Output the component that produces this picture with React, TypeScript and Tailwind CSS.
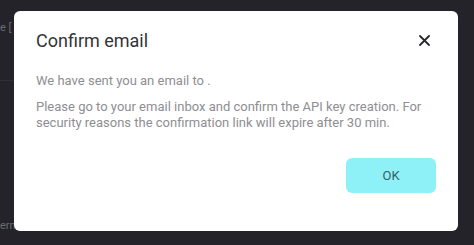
import React from "react";

export default function App() {
  return (
    <div className="relative w-[474px] h-[245px] overflow-hidden bg-[#232329]" style={{ fontFamily: "Roboto, 'Noto Sans', sans-serif" }}>
      <div className="absolute left-0 top-[20px] text-[11px] text-[#6b6b72]">e [</div>
      <div className="absolute left-0 top-[80px] w-[14px] h-px bg-[#2e2e35]" />
      <div className="absolute left-0 top-[218px] text-[11px] text-[#6b6b72]">ern</div>
      <div className="absolute left-[14px] top-[11px] w-[444px] h-[220px] rounded-[6px] bg-white flex flex-col">
        <div className="flex items-center justify-between pl-[22px] pr-[28px] pt-[18px]">
          <div className="text-[18px] leading-[24px] text-[#333336]">Confirm email</div>
          <svg width="11" height="11" viewBox="0 0 11 11" className="mt-[-2px]">
            <path d="M1 1 L10 10 M10 1 L1 10" stroke="#2a2a2e" strokeWidth="1.8" strokeLinecap="round" />
          </svg>
        </div>
        <div className="pl-[22px] pr-[20px] pt-[20px] text-[13px] leading-[16px] text-[#8e8e92]">
          <p>We have sent you an email to .</p>
          <p className="mt-[10px]">Please go to your email inbox and confirm the API key creation. For security reasons the confirmation link will expire after 30 min.</p>
        </div>
        <div className="flex justify-end pr-[22px] mt-[27px]">
          <button className="w-[90px] h-[35px] rounded-[6px] bg-[#8ef1f8] text-[13px] text-[#3d5d63]">OK</button>
        </div>
      </div>
    </div>
  );
}
